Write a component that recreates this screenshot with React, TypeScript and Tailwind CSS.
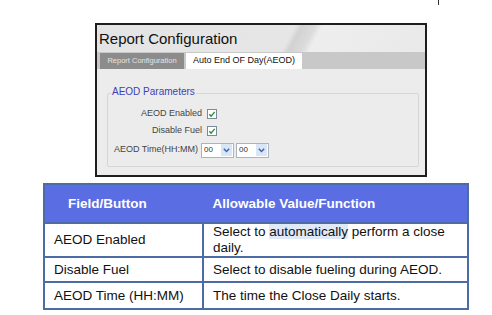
import React from "react";

type Row = { field: string; value: React.ReactNode; h: string };

function CheckBox() {
  return (
    <svg width="10" height="10" viewBox="0 0 10 10" aria-hidden>
      <rect x="0.5" y="0.5" width="9" height="9" fill="#ffffff" stroke="#7a8a99" />
      <path d="M2.3 5.2l1.8 1.9 3.6-4.2" stroke="#2e8b3a" strokeWidth="1.4" fill="none" />
    </svg>
  );
}

function TimeSelect() {
  return (
    <div className="flex items-center w-[33px] h-[15px] bg-white border border-[#a9b4bf] pl-[2px]">
      <span className="text-[8px] text-[#333] flex-1">00</span>
      <div className="w-[11px] h-[12px] mr-[1px] bg-[#dbe6f4] flex items-center justify-center">
        <svg width="7" height="5" viewBox="0 0 7 5" aria-hidden>
          <path d="M0.8 0.8l2.7 2.7 2.7-2.7" stroke="#3a64b8" strokeWidth="1.5" fill="none" />
        </svg>
      </div>
    </div>
  );
}

export default function App() {
  const rows: Row[] = [
    {
      field: "AEOD Enabled",
      h: "h-[32px]",
      value: (
        <>
          <span className="block">
            Select to <span className="bg-[#dfe9f7]">automatically</span> perform a close
          </span>
          <span className="block">daily.</span>
        </>
      ),
    },
    { field: "Disable Fuel", h: "h-[25px]", value: "Select to disable fueling during AEOD." },
    { field: "AEOD Time (HH:MM)", h: "h-[27px]", value: "The time the Close Daily starts." },
  ];

  return (
    <div className="relative w-[492px] h-[315px] bg-white overflow-hidden font-['Liberation_Sans',Arial,sans-serif]">
      {/* stray mark top right */}
      <div className="absolute left-[438px] top-0 w-[1px] h-[5px] bg-[#333]" />

      {/* Screenshot panel */}
      <div className="pt-[23px] pl-[95px]">
        <div className="w-[332px] h-[154px] border-2 border-[#1e1e1e] flex flex-col bg-[#ececec]">
          <div className="h-[27px] flex items-center pl-[2px] bg-[linear-gradient(118deg,#e4e4e4_0%,#e6e6e6_58%,#d2d2d2_60%,#dcdcdc_64%,#eeeeee_66%,#e9e9e9_100%)]">
            <span className="text-[15px] text-[#111] leading-none">Report Configuration</span>
          </div>
          <div className="h-[17px] flex items-end gap-[2px] pl-[3px] bg-[#c8c8c8]">
            <div className="w-[84px] h-[16px] flex items-center justify-center bg-[#8c8c8c] text-[7.5px] text-[#e4e4e4]">
              Report Configuration
            </div>
            <div className="w-[116px] h-[16px] flex items-center justify-center bg-white text-[9px] text-[#111]">
              Auto End OF Day(AEOD)
            </div>
          </div>
          <div className="flex-1 pt-[24px] pl-[10px] pr-[6px]">
            <div className="relative h-[74px] border border-[#d6d6d6] rounded-[2px]">
              <span className="absolute -top-[7px] left-[3px] px-[1px] bg-[#ececec] text-[10px] leading-none text-[#3d3fb3]">
                AEOD Parameters
              </span>
              <div className="pt-[14px] flex flex-col gap-[5px]">
                <div className="flex items-center h-[12px]">
                  <span className="w-[94px] text-right text-[9px] text-[#444]">AEOD Enabled</span>
                  <div className="ml-[5px]">
                    <CheckBox />
                  </div>
                </div>
                <div className="flex items-center h-[12px]">
                  <span className="w-[94px] text-right text-[9px] text-[#444]">Disable Fuel</span>
                  <div className="ml-[5px]">
                    <CheckBox />
                  </div>
                </div>
                <div className="flex items-center h-[16px]">
                  <span className="w-[90px] text-right text-[9px] text-[#444]">AEOD Time(HH:MM)</span>
                  <div className="ml-[3px] flex gap-[2px]">
                    <TimeSelect />
                    <TimeSelect />
                  </div>
                </div>
              </div>
            </div>
          </div>
        </div>
      </div>

      {/* Table */}
      <div className="mt-[6px] ml-[43px] w-[426px]">
        <table className="w-full border-collapse border-2 border-[#4d6ca6] text-[13.5px] leading-[16px]">
          <thead>
            <tr className="h-[39px] bg-[#5b6de2] text-white">
              <th className="w-[159px] pl-[23px] text-left font-bold border-r border-[#5b6de2]">Field/Button</th>
              <th className="pl-[9px] text-left font-bold">Allowable Value/Function</th>
            </tr>
          </thead>
          <tbody>
            {rows.map((r) => (
              <tr key={r.field} className={`${r.h} text-[#111]`}>
                <td className="pl-[9px] border-2 border-[#4d6ca6]">{r.field}</td>
                <td className="pl-[9px] pr-[6px] border-2 border-[#4d6ca6]">{r.value}</td>
              </tr>
            ))}
          </tbody>
        </table>
      </div>
    </div>
  );
}
